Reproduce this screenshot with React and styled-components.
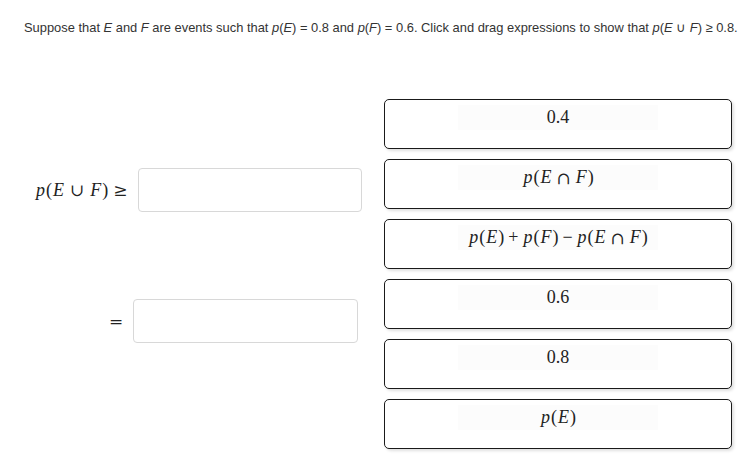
import styled, { createGlobalStyle } from 'styled-components';

const GlobalStyle = createGlobalStyle`
  body {
    margin: 0;
    background: #fff;
    font-family: "Liberation Sans", Arial, sans-serif;
    color: #222;
  }
`;

export default function App() {
  const cards = [
    { id: 'a', content: <>0.4</> },
    {
      id: 'b',
      content: (
        <>
          <I>p</I>(<I>E</I>
          <Op sym>∩</Op>
          <I>F</I>)
        </>
      ),
    },
    {
      id: 'c',
      content: (
        <>
          <I>p</I>(<I>E</I>)<Op>+</Op>
          <I>p</I>(<I>F</I>)<Op>−</Op>
          <I>p</I>(<I>E</I>
          <Op sym>∩</Op>
          <I>F</I>)
        </>
      ),
    },
    { id: 'd', content: <>0.6</> },
    { id: 'e', content: <>0.8</> },
    {
      id: 'f',
      content: (
        <>
          <I>p</I>(<I>E</I>)
        </>
      ),
    },
  ];

  return (
    <Page>
      <GlobalStyle />
      <Prompt>
        Suppose that <em>E</em> and <em>F</em> are events such that <em>p</em>(<em>E</em>) = 0.8 and{' '}
        <em>p</em>(<em>F</em>) = 0.6. Click and drag expressions to show that <em>p</em>(<em>E</em> ∪{' '}
        <em>F</em>) ≥ 0.8.
      </Prompt>

      <Workspace>
        <Steps>
          <StepRow indent={35} top={69}>
            <MathLabel>
              <I>p</I>(<I>E</I>
              <Op sym wide>∪</Op>
              <I>F</I>)<Op sym wide>≥</Op>
            </MathLabel>
            <DropBox width={224} />
          </StepRow>
          <StepRow indent={104} top={87}>
            <MathLabel>
              <Op sym wide>=</Op>
            </MathLabel>
            <DropBox width={225} />
          </StepRow>
        </Steps>

        <CardList>
          {cards.map((c) => (
            <Card key={c.id}>
              <CardInner>{c.content}</CardInner>
            </Card>
          ))}
        </CardList>
      </Workspace>
    </Page>
  );
}

const I = styled.i`
  font-style: italic;
  padding: 0 1px;
`;

const Op = styled.span`
  margin: 0 ${(p) => (p.wide ? 5 : 4)}px;
  ${(p) =>
    p.sym &&
    `
    font-family: "DejaVu Serif", serif;
    font-size: 17px;
    font-weight: 300;
  `}
`;

const Page = styled.div`
  width: 755px;
  height: 468px;
  overflow: hidden;
`;

const Prompt = styled.p`
  margin: 0;
  padding: 20px 0 0 24px;
  font-size: 12.9px;
  line-height: 16px;
  white-space: nowrap;
  color: #333;

  em {
    font-style: italic;
  }
`;

const Workspace = styled.div`
  display: flex;
  padding-top: 63px;
`;

const Steps = styled.div`
  width: 384px;
  display: flex;
  flex-direction: column;
`;

const StepRow = styled.div`
  display: flex;
  align-items: center;
  gap: 5px;
  padding-left: ${(p) => p.indent}px;
  margin-top: ${(p) => p.top}px;
`;

const MathLabel = styled.span`
  font-family: "Liberation Serif", "DejaVu Serif", serif;
  font-size: 18px;
  color: #222;
  white-space: nowrap;
`;

const DropBox = styled.div`
  width: ${(p) => p.width}px;
  height: 44px;
  box-sizing: border-box;
  border: 1px solid #d8d8d8;
  border-radius: 4px;
  background: #fff;
`;

const CardList = styled.div`
  display: flex;
  flex-direction: column;
  gap: 10px;
`;

const Card = styled.div`
  width: 348px;
  height: 50px;
  box-sizing: border-box;
  border: 1.5px solid #1a1a1a;
  border-radius: 5px;
  background: #fff;
  box-shadow: 2px 2px 3px rgba(0, 0, 0, 0.12);
  display: flex;
  justify-content: center;
  padding-top: 5px;
`;

const CardInner = styled.div`
  min-width: 200px;
  height: 25px;
  display: flex;
  align-items: center;
  justify-content: center;
  background: #fcfcfc;
  font-family: "Liberation Serif", "DejaVu Serif", serif;
  font-size: 18px;
  color: #222;
  white-space: nowrap;
`;
